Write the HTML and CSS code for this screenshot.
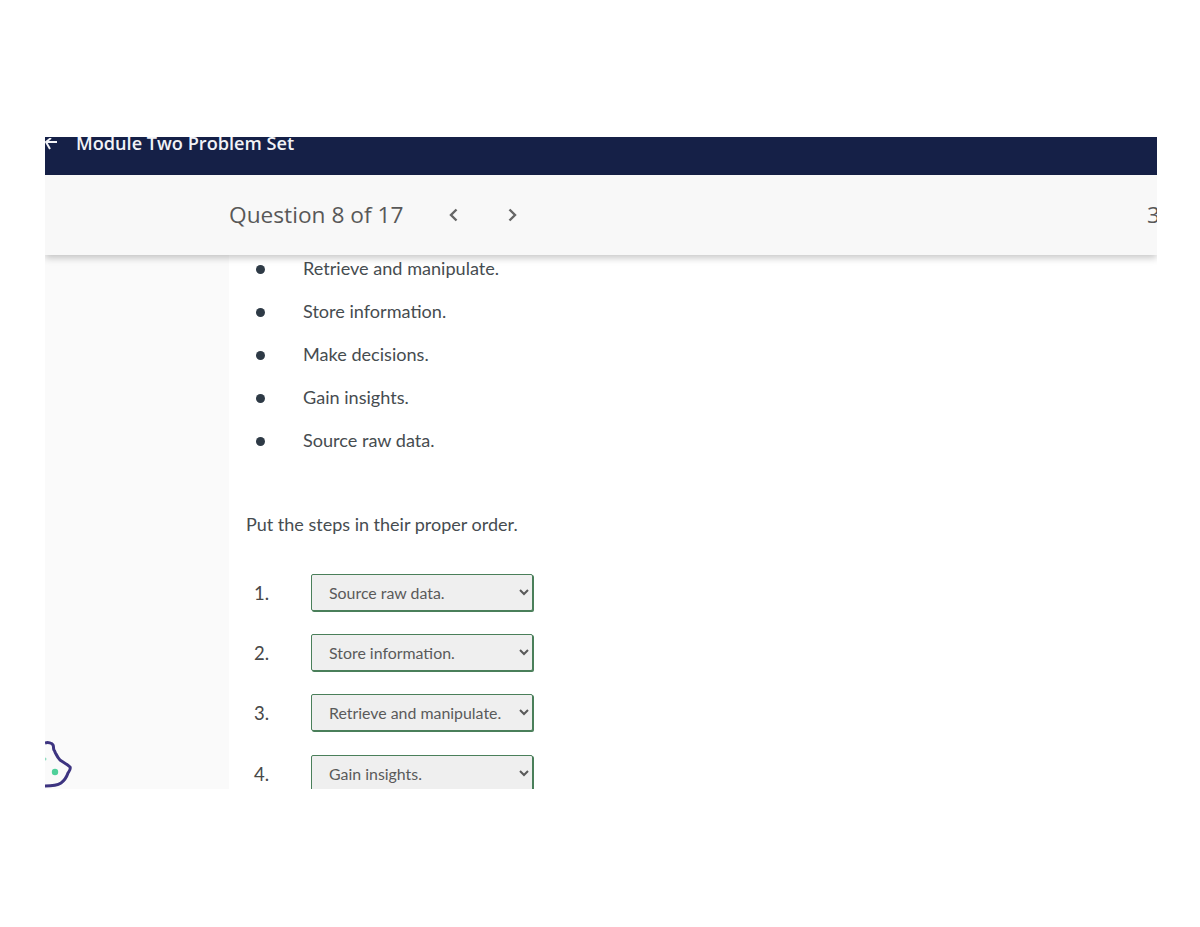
FILE: index.html
```html
<!DOCTYPE html>
<html lang="en">
<head>
<meta charset="utf-8">
<title>Module Two Problem Set</title>
<link rel="stylesheet" href="styles.css">
</head>
<body>
<div class="frame">
  <header class="topbar">
    <svg class="back" width="16" height="16" viewBox="0 0 16 16" aria-hidden="true"><path d="M14 4H3M8 0 3 4l4 7" fill="none" stroke="#f2f3f7" stroke-width="2"/></svg>
    <span class="title">Module Two Problem Set</span>
  </header>
  <div class="qbar">
    <span class="qtext">Question 8 of 17</span>
    <svg class="chev first" width="12" height="16" viewBox="0 0 12 16" aria-hidden="true"><path d="M9.5 2.5 4 8l5.500 5.500" fill="none" stroke="#666" stroke-width="2.400"/></svg>
    <svg class="chev" width="12" height="16" viewBox="0 0 12 16" aria-hidden="true"><path d="M2.500 2.500 8 8l-5.500 5.500" fill="none" stroke="#666" stroke-width="2.400"/></svg>
    <span class="qright">3</span>
  </div>
  <div class="body">
    <aside class="side"></aside>
    <main class="content">
      <ul class="bullets">
        <li>Retrieve and manipulate.</li>
        <li>Store information.</li>
        <li>Make decisions.</li>
        <li>Gain insights.</li>
        <li>Source raw data.</li>
      </ul>
      <p class="prompt">Put the steps in their proper order.</p>
      <div class="steps">
        <div class="step"><span class="num">1.</span><select class="pick"><option>Source raw data.</option></select></div>
        <div class="step"><span class="num">2.</span><select class="pick"><option>Store information.</option></select></div>
        <div class="step"><span class="num">3.</span><select class="pick"><option>Retrieve and manipulate.</option></select></div>
        <div class="step"><span class="num">4.</span><select class="pick"><option>Gain insights.</option></select></div>
      </div>
    </main>
    <svg class="bot" width="28" height="50" viewBox="0 0 28 50" aria-hidden="true">
      <path d="M0 2C3 1 7 2 8 4c1 2 0 3 1 5 1 1 1 3 2 4 1 2 2 4 4 6 3 2 7 4 10 7 1 2 0 3-2 6-1 3-3 7-7 10-3 2-8 3-16 3" fill="none" stroke="#3d3480" stroke-width="3"/>
      <circle cx="10" cy="31" r="3.200" fill="#4fd09a"/>
      <circle cx="0" cy="18" r="1.500" fill="#8fdcc0"/>
    </svg>
  </div>
</div>
</body>
</html>
```

FILE: styles.css
```css
html, body { margin: 0; padding: 0; background: #fff; }
body { padding: 137px 43px 0 45px; font-family: "Lato", sans-serif; }
.frame { height: 652px; overflow: hidden; display: flex; flex-direction: column; background: #fff; }
.topbar { height: 38px; flex: none; background: #152047; color: #fff; display: flex; align-items: flex-start; position: relative; overflow: hidden; }
.back { position: absolute; left: -2px; top: 1px; }
.title { margin: -5px 0 0 31px; font: 600 18.15px/22px "Open Sans", sans-serif; color: #f2f3f7; }
.qbar { height: 80px; flex: none; background: #f8f8f8; display: flex; align-items: center; position: relative; z-index: 1; box-shadow: 0 3px 7px rgba(0,0,0,.22); }
.qtext { margin-left: 184px; font: 400 22.700px/28px "Open Sans", sans-serif; color: #585858; width: 218px; }
.chev { flex: none; }
.chev.first { margin-right: 48px; }
.qright { margin-left: auto; margin-right: -3px; font: 400 22.700px/28px "Open Sans", sans-serif; color: #585858; }
.body { flex: 1; display: flex; position: relative; min-height: 0; }
.side { width: 184px; flex: none; background: #fafafa; }
.content { flex: 1; color: #464c50; font-size: 18.100px; }
.bullets { list-style: none; margin: 0; padding: 0 0 0 74px; }
.bullets li { height: 43px; line-height: 26px; position: relative; }
.bullets li::before { content: ""; position: absolute; left: -47px; top: 10px; width: 9px; height: 9px; border-radius: 50%; background: #2e3a46; }
.prompt { margin: 40px 0 0 17px; line-height: 28px; font-size: 18px; }
.steps { margin-top: 36px; display: flex; flex-direction: column; gap: 23px; }
.step { display: flex; align-items: center; height: 37px; flex: none; }
.num { width: 82px; padding-left: 25px; box-sizing: border-box; font-size: 18.500px; color: #484848; }
.pick { width: 222px; height: 37px; box-sizing: border-box; border: 1px solid #4a7f5a; border-radius: 2px; background-color: #efefef; color: #5a5a5a; font: 400 15.900px "Lato", sans-serif; padding: 0 0 0 13px; box-shadow: 1px 1px 0 #4a7f5a; }
.step:last-child { margin-top: 1px; }
.bot { position: absolute; left: 0; top: 486px; }
```
